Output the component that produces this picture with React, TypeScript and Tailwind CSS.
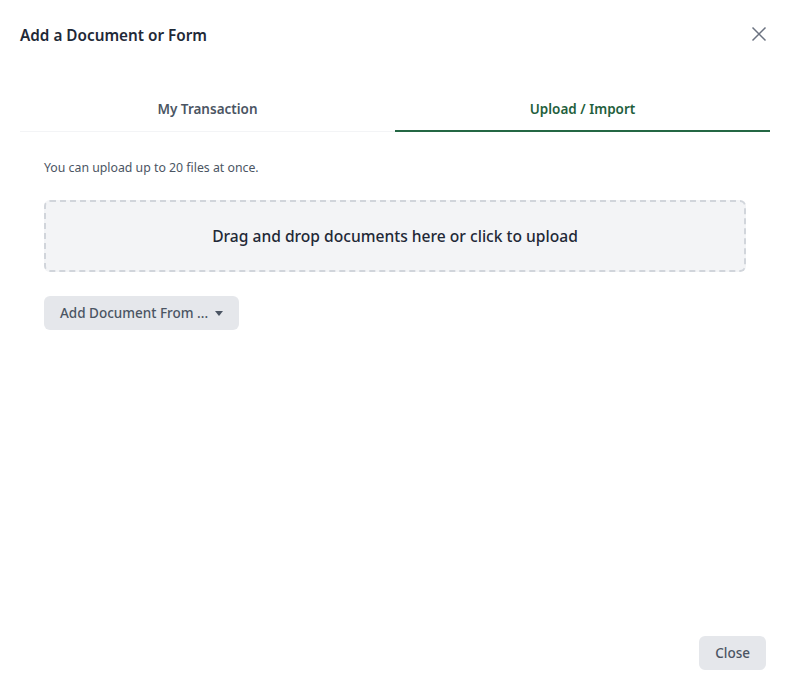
import React from "react";

export default function App() {
  return (
    <div className="w-[789px] h-[683px] bg-white flex flex-col font-['Noto_Sans',sans-serif] text-[#1f2937]">
      <div className="flex items-center justify-between pl-5 pr-[22px] pt-[23px] h-[48px]">
        <h1 className="text-[15.3px] font-semibold text-[#1f2937]">Add a Document or Form</h1>
        <button className="text-[#6b7280] mb-[3px]">
          <svg width="16" height="16" viewBox="0 0 16 16" fill="none" stroke="currentColor" strokeWidth="1.5">
            <path d="M1.5 1.5 14.5 14.5M14.5 1.5 1.5 14.5" />
          </svg>
        </button>
      </div>

      <div className="flex ml-5 mr-[19px] mt-[38px]">
        <div className="flex-1 h-[46px] pt-[2px] flex items-center justify-center border-b border-[#f3f4f6] text-[13.5px] font-semibold text-[#4b5563]">
          My Transaction
        </div>
        <div className="flex-1 h-[46px] pt-[2px] flex items-center justify-center border-b-2 border-[#246744] text-[13.5px] font-semibold text-[#1f5f3d]">
          Upload / Import
        </div>
      </div>

      <div className="flex flex-col pl-11 pr-[43px] pt-[27px]">
        <p className="text-[12.3px] text-[#4b5563]">You can upload up to 20 files at once.</p>
        <div className="mt-[23px] h-[72px] flex items-center justify-center rounded-md border-2 border-dashed border-[#d1d5db] bg-[#f3f4f6] text-[15.6px] font-medium text-[#1f2937]">
          Drag and drop documents here or click to upload
        </div>
        <div className="mt-[24px]">
          <button className="h-[34px] px-4 flex items-center gap-[7px] rounded-md bg-[#e5e7eb] text-[13.5px] font-medium text-[#4b5563]">
            Add Document From ...
            <svg width="8" height="5" viewBox="0 0 8 5" fill="currentColor">
              <path d="M0 0h8L4 5z" />
            </svg>
          </button>
        </div>
      </div>

      <div className="flex-1" />
      <div className="flex justify-end pr-[23px] pb-[13px]">
        <button className="h-[34px] px-4 rounded-md bg-[#e5e7eb] text-[13.5px] font-medium text-[#4b5563]">
          Close
        </button>
      </div>
    </div>
  );
}
